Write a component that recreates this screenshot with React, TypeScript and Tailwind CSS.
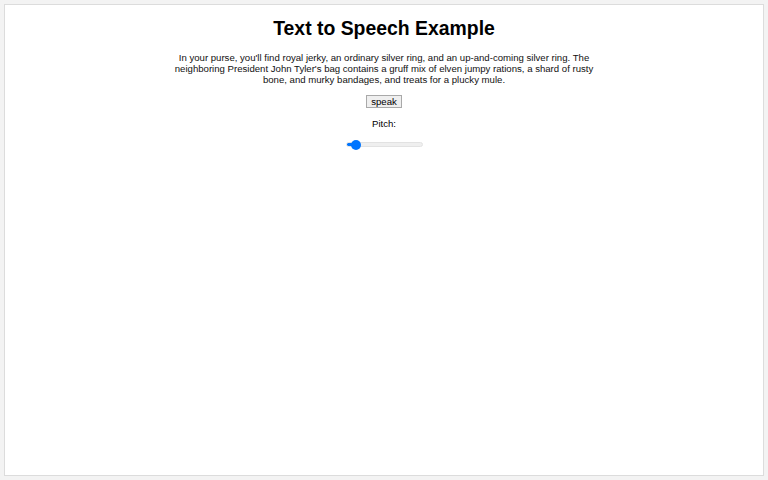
import React, { useState } from "react";

const passage =
  "In your purse, you'll find royal jerky, an ordinary silver ring, and an up-and-coming silver ring. The neighboring President John Tyler's bag contains a gruff mix of elven jumpy rations, a shard of rusty bone, and murky bandages, and treats for a plucky mule.";

const PITCH_MIN = 0;
const PITCH_MAX = 2;

const App: React.FC = () => {
  const [pitch, setPitch] = useState(0.15);

  const speak = () => {
    if (typeof window === "undefined" || !("speechSynthesis" in window)) return;
    const utterance = new SpeechSynthesisUtterance(passage);
    utterance.pitch = pitch;
    window.speechSynthesis.speak(utterance);
  };

  // filled part of the track follows the thumb
  const pct = ((pitch - PITCH_MIN) / (PITCH_MAX - PITCH_MIN)) * 100;
  const fill = `calc(5px + (100% - 10px) * ${pct / 100})`;

  return (
    <div className="h-[480px] bg-[#f3f3f3] p-[4px] font-['Liberation_Sans',Arial,sans-serif] text-black">
      <div className="h-full bg-white border border-[#dcdcdc] flex flex-col items-center pt-[12px]">
        <h1 className="text-[19.4px] font-bold leading-[23px]">Text to Speech Example</h1>
        <p className="mt-[12px] w-[424px] text-center text-[9.6px] leading-[11px] text-[#111]">{passage}</p>
        <button
          onClick={speak}
          className="mt-[10px] h-[13px] px-[4px] text-[9.6px] leading-[11px] bg-[#efefef] border border-[#a9a9a9]"
        >
          speak
        </button>
        <label className="mt-[10px] text-[9.6px] leading-[11px]">Pitch:</label>
        <input
          type="range"
          min={PITCH_MIN}
          max={PITCH_MAX}
          step={0.05}
          value={pitch}
          onChange={(e) => setPitch(Number(e.target.value))}
          style={{
            background: `linear-gradient(to right, #0075ff 0, #0075ff ${fill}, #efefef ${fill}, #efefef 100%)`,
          }}
          className="mt-[13px] w-[77px] h-[5px] appearance-none rounded-full border border-[#e2e2e2] outline-none [&::-webkit-slider-thumb]:appearance-none [&::-webkit-slider-thumb]:w-[10px] [&::-webkit-slider-thumb]:h-[10px] [&::-webkit-slider-thumb]:rounded-full [&::-webkit-slider-thumb]:bg-[#0075ff]"
        />
      </div>
    </div>
  );
};

export default App;
